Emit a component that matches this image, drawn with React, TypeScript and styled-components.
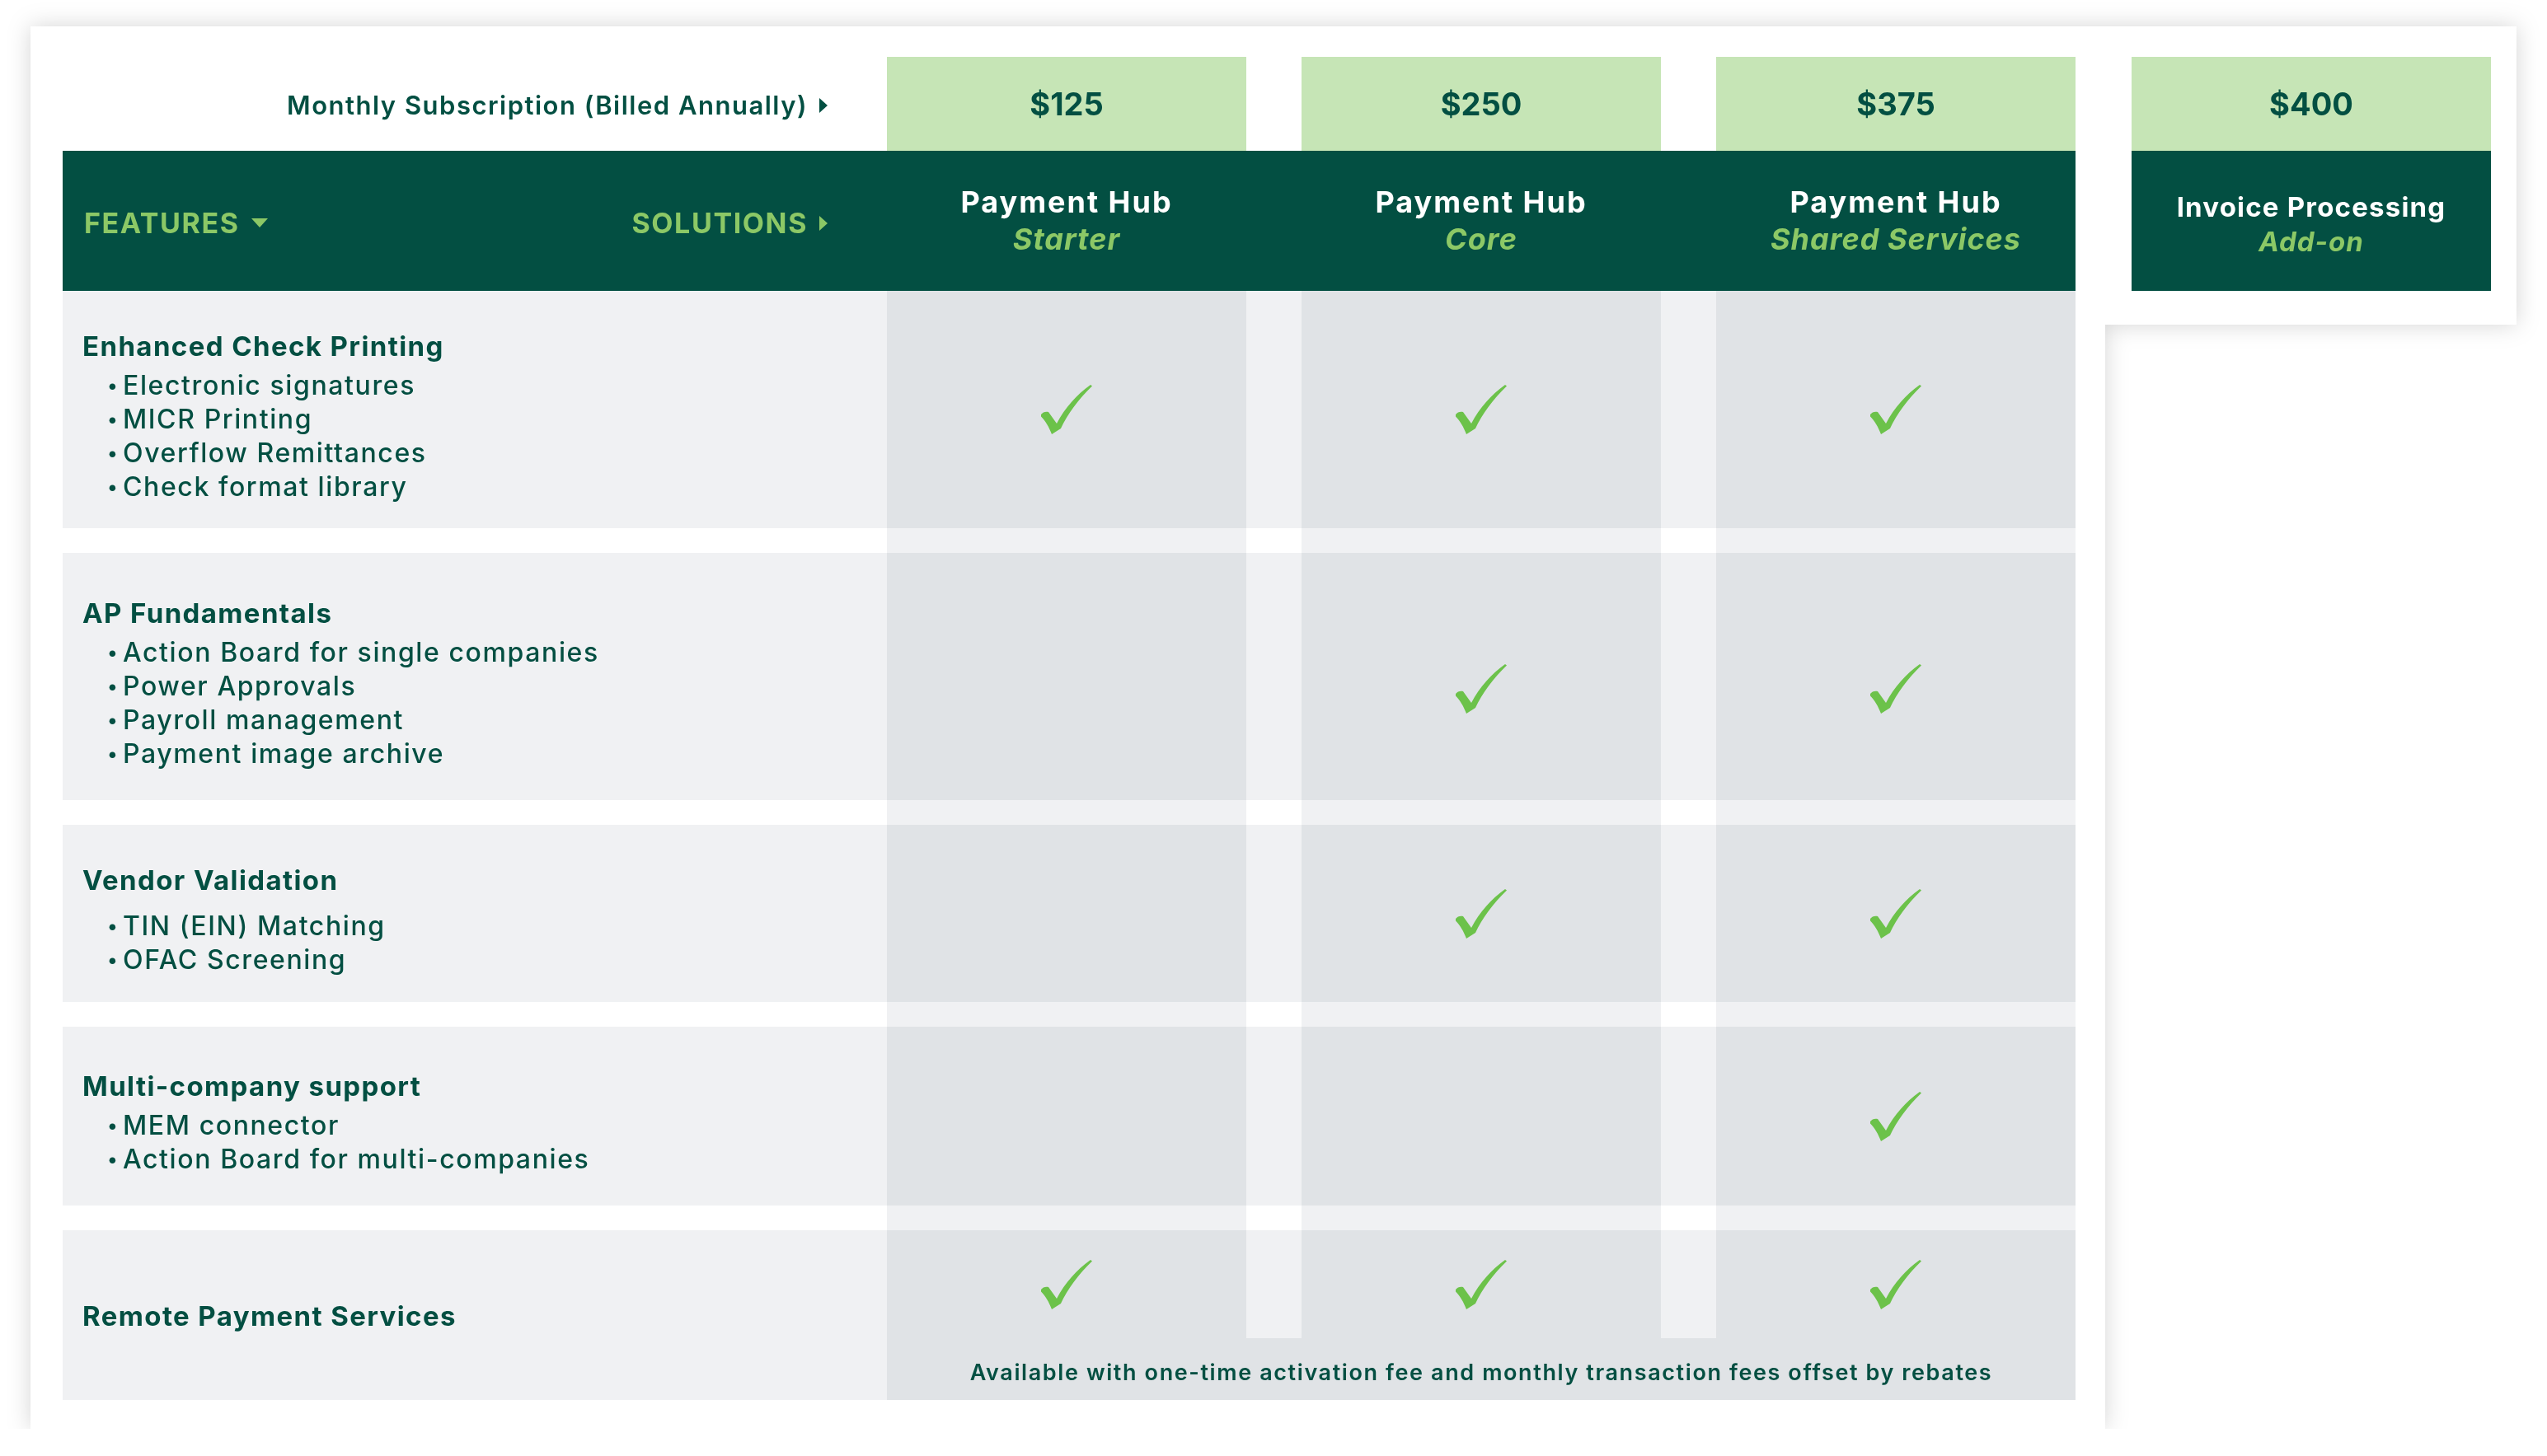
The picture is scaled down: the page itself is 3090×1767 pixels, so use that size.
import React from 'react';
import styled, { createGlobalStyle } from 'styled-components';

const GlobalStyle = createGlobalStyle`
  html, body {
    margin: 0;
    padding: 0;
    background: #ffffff;
  }
  body {
    font-family: Inter, "Noto Sans", "Liberation Sans", sans-serif;
    color: #034b3c;
  }
`;

// label column, then plan / gap / plan / gap / plan
const COLS = '1000px 436px 67px 436px 67px 436px';

const DARK = '#034f42';
const ACCENT = '#8cc866';
const PRICE_BG = '#c6e5b6';
const ROW_BG = '#f0f1f3';
const CELL_BG = '#e0e3e6';
const CHECK = '#6cc24a';

const Page = styled.div`
  padding: 32px 0 0 37px;
`;

const Cards = styled.div`
  display: flex;
  align-items: flex-start;
  filter: drop-shadow(0 0 14px rgba(0, 0, 0, 0.17));
`;

const MainCard = styled.div`
  box-sizing: border-box;
  width: 2517px;
  padding: 37px 36px 35px 39px;
  background: #ffffff;
`;

const SideCard = styled.div`
  box-sizing: border-box;
  width: 499px;
  padding: 37px 31px 41px 32px;
  background: #ffffff;
`;

const PriceRow = styled.div`
  display: grid;
  grid-template-columns: ${COLS};
  height: 114px;
`;

const PriceLabel = styled.div`
  display: flex;
  align-items: center;
  justify-content: flex-end;
  gap: 13px;
  padding: 3px 71px 0 0;
  font-size: 31px;
  letter-spacing: 1.5px;
  font-weight: 600;
  color: ${DARK};
`;

const PriceCell = styled.div`
  display: flex;
  align-items: center;
  justify-content: center;
  height: 114px;
  background: ${PRICE_BG};
  font-size: 38px;
  font-weight: 700;
  color: ${DARK};
`;

const HeaderRow = styled.div`
  display: grid;
  grid-template-columns: ${COLS};
  height: 170px;
  background: ${DARK};
`;

const HeaderLabel = styled.div`
  display: flex;
  align-items: center;
  justify-content: space-between;
  padding: 5px 71px 0 26px;
`;

const NavItem = styled.div`
  display: flex;
  align-items: center;
  gap: 13px;
  font-size: 34px;
  letter-spacing: 1.6px;
  font-weight: 700;
  color: ${ACCENT};
  text-transform: uppercase;
`;

const PlanTitle = styled.div<{ $small?: boolean }>`
  display: flex;
  flex-direction: column;
  align-items: center;
  justify-content: center;
  box-sizing: border-box;
  height: 170px;
  padding-top: ${p => (p.$small ? 8 : 0)}px;
  background: ${DARK};
  font-size: ${p => (p.$small ? 33 : 36)}px;
  letter-spacing: ${p => (p.$small ? 1.2 : 2)}px;
  line-height: ${p => (p.$small ? 42 : 45)}px;
  font-weight: 700;
  color: #ffffff;
  text-align: center;
`;

const PlanTier = styled.span`
  color: ${ACCENT};
  font-style: italic;
  letter-spacing: 1px;
`;

const Body = styled.div`
  display: flex;
  flex-direction: column;
`;

const FeatureRow = styled.div<{ $h: number; $note?: boolean }>`
  display: grid;
  grid-template-columns: ${COLS};
  grid-template-rows: ${p => (p.$note ? '1fr 75px' : '1fr')};
  height: ${p => p.$h}px;
  background: ${ROW_BG};
`;

const Spacer = styled.div`
  display: grid;
  grid-template-columns: ${COLS};
  height: 30px;
`;

const Stripe = styled.div<{ $on?: boolean }>`
  background: ${p => (p.$on ? ROW_BG : 'transparent')};
`;

const FeatureLabel = styled.div<{ $list: boolean }>`
  grid-row: 1 / -1;
  display: flex;
  flex-direction: column;
  justify-content: center;
  padding: ${p => (p.$list ? 16 : 2)}px 0 0 24px;
`;

const FeatureTitle = styled.div`
  font-size: 33px;
  letter-spacing: 1.4px;
  line-height: 41px;
  font-weight: 700;
  color: ${DARK};
`;

const BulletList = styled.ul<{ $gap: number }>`
  list-style: none;
  margin: ${p => p.$gap}px 0 0;
  padding: 0 0 0 30px;
`;

const Bullet = styled.li`
  display: flex;
  font-size: 32px;
  letter-spacing: 1.6px;
  line-height: 41px;
  font-weight: 500;
  color: ${DARK};

  &::before {
    content: '•';
    width: 19px;
    flex: none;
    font-size: 24px;
    letter-spacing: 0;
  }
`;

const PlanCell = styled.div<{ $shift: number }>`
  display: flex;
  align-items: center;
  justify-content: center;
  padding-top: ${p => p.$shift}px;
  background: ${CELL_BG};
`;

const Note = styled.div`
  grid-column: 2 / -1;
  display: flex;
  align-items: center;
  justify-content: center;
  padding-top: 8px;
  background: ${CELL_BG};
  font-size: 27px;
  letter-spacing: 1.6px;
  font-weight: 600;
  color: ${DARK};
`;

const RightTri = () => (
  <svg width="12" height="20" viewBox="0 0 12 20">
    <path d="M1 1 L11 10 L1 19 Z" fill="currentColor" />
  </svg>
);

const DownTri = () => (
  <svg width="22" height="13" viewBox="0 0 22 13">
    <path d="M1 1 H21 L11 12 Z" fill="currentColor" />
  </svg>
);

const Check = () => (
  <svg width="64" height="60" viewBox="0 0 64 60">
    <path
      d="M1 36 C3 33 7 32 10 33 L20 47 C30 28 44 12 61 0 L63 1.5 C46 18 33 36 25 53 L14 60 C11 52 6 43 1 38.5 Z"
      fill={CHECK}
    />
  </svg>
);

type Feature = {
  title: string;
  items: string[];
  plans: boolean[];
  h: number;
  shift?: number;
  listGap?: number;
  note?: string;
};

const features: Feature[] = [
  {
    title: 'Enhanced Check Printing',
    items: ['Electronic signatures', 'MICR Printing', 'Overflow Remittances', 'Check format library'],
    plans: [true, true, true],
    h: 288,
  },
  {
    title: 'AP Fundamentals',
    items: ['Action Board for single companies', 'Power Approvals', 'Payroll management', 'Payment image archive'],
    plans: [false, true, true],
    h: 300,
    shift: 30,
  },
  {
    title: 'Vendor Validation',
    items: ['TIN (EIN) Matching', 'OFAC Screening'],
    plans: [false, true, true],
    h: 215,
    listGap: 14,
  },
  {
    title: 'Multi-company support',
    items: ['MEM connector', 'Action Board for multi-companies'],
    plans: [false, false, true],
    h: 217,
  },
  {
    title: 'Remote Payment Services',
    items: [],
    plans: [true, true, true],
    h: 206,
    note: 'Available with one-time activation fee and monthly transaction fees offset by rebates',
  },
];

const plans = [
  { price: '$125', name: 'Payment Hub', tier: 'Starter' },
  { price: '$250', name: 'Payment Hub', tier: 'Core' },
  { price: '$375', name: 'Payment Hub', tier: 'Shared Services' },
];

const App: React.FC = () => {
  return (
    <>
      <GlobalStyle />
      <Page>
        <Cards>
          <MainCard>
            <PriceRow>
              <PriceLabel>
                Monthly Subscription (Billed Annually)
                <RightTri />
              </PriceLabel>
              {plans.map((p, i) => (
                <React.Fragment key={p.price}>
                  {i > 0 && <div />}
                  <PriceCell>{p.price}</PriceCell>
                </React.Fragment>
              ))}
            </PriceRow>

            <HeaderRow>
              <HeaderLabel>
                <NavItem>
                  Features
                  <DownTri />
                </NavItem>
                <NavItem>
                  Solutions
                  <RightTri />
                </NavItem>
              </HeaderLabel>
              {plans.map((p, i) => (
                <React.Fragment key={p.tier}>
                  {i > 0 && <div />}
                  <PlanTitle>
                    <span>{p.name}</span>
                    <PlanTier>{p.tier}</PlanTier>
                  </PlanTitle>
                </React.Fragment>
              ))}
            </HeaderRow>

            <Body>
              {features.map((f, idx) => (
                <React.Fragment key={f.title}>
                  {idx > 0 && (
                    <Spacer>
                      <Stripe />
                      <Stripe $on />
                      <Stripe />
                      <Stripe $on />
                      <Stripe />
                      <Stripe $on />
                    </Spacer>
                  )}
                  <FeatureRow $h={f.h} $note={!!f.note}>
                    <FeatureLabel $list={f.items.length > 0}>
                      <FeatureTitle>{f.title}</FeatureTitle>
                      {f.items.length > 0 && (
                        <BulletList $gap={f.listGap ?? 6}>
                          {f.items.map(item => (
                            <Bullet key={item}>{item}</Bullet>
                          ))}
                        </BulletList>
                      )}
                    </FeatureLabel>
                    {f.plans.map((on, i) => (
                      <React.Fragment key={i}>
                        {i > 0 && <div />}
                        <PlanCell $shift={f.shift ?? 0}>{on && <Check />}</PlanCell>
                      </React.Fragment>
                    ))}
                    {f.note && <Note>{f.note}</Note>}
                  </FeatureRow>
                </React.Fragment>
              ))}
            </Body>
          </MainCard>

          <SideCard>
            <PriceCell>$400</PriceCell>
            <PlanTitle $small>
              <span>Invoice Processing</span>
              <PlanTier>Add-on</PlanTier>
            </PlanTitle>
          </SideCard>
        </Cards>
      </Page>
    </>
  );
};

export default App;
